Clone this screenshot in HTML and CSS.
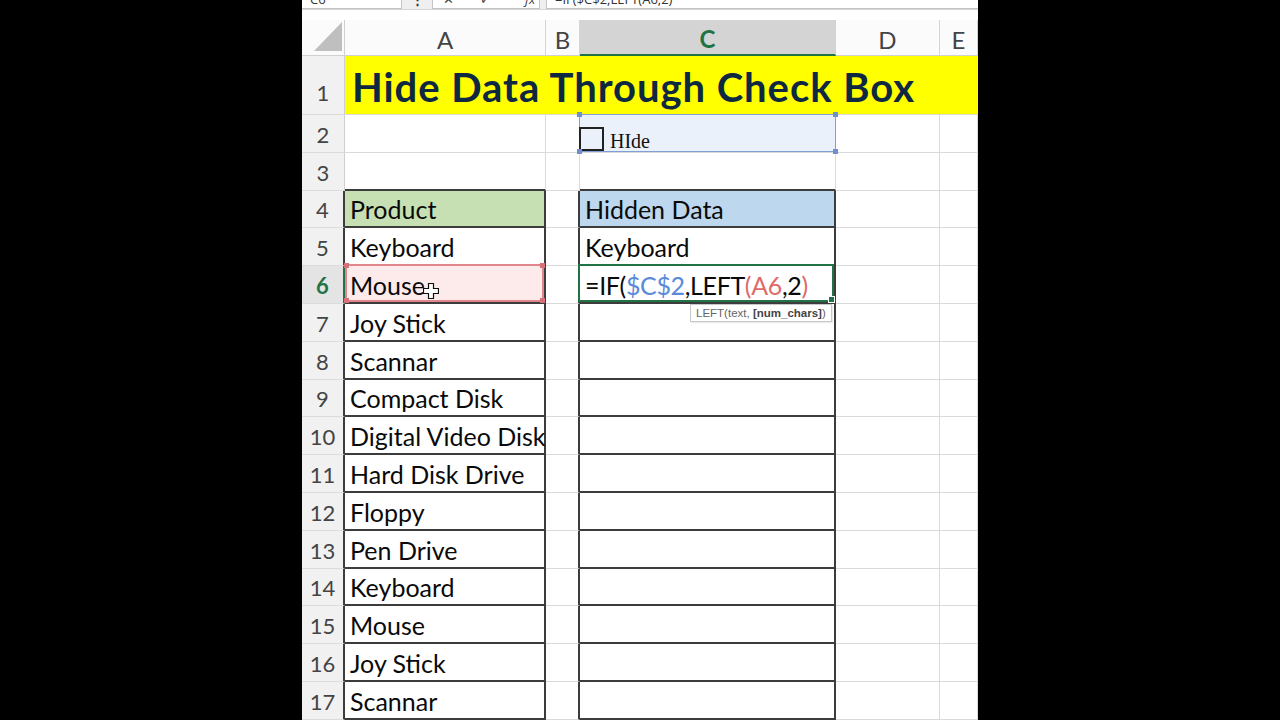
FILE: index.html
```html
<!DOCTYPE html>
<html lang="en">
<head>
<meta charset="utf-8">
<title>Hide Data Through Check Box</title>
<link rel="stylesheet" href="styles.css">
</head>
<body>
<div class="screen">
  <div class="topbar">
    <div class="box namebox"><span class="clip">C6</span></div>
    <div class="ribbon-sep"><span class="clip dots">⋮</span></div>
    <div class="box fnbox"><span class="clip icons"><span>✕</span><span>✓</span><span class="fx">fx</span></span></div>
    <div class="box formula"><span class="clip">=IF($C$2,LEFT(A6,2)</span></div>
  </div>
  <div class="gap"></div>
  <div class="sheet">
    <!-- column headers -->
    <div class="corner"><svg width="28" height="29" viewBox="0 0 28 29"><polygon points="0,29 28,0 28,29" fill="#bfbfbf"/></svg></div>
    <div class="ch">A</div>
    <div class="ch">B</div>
    <div class="ch sel">C</div>
    <div class="ch">D</div>
    <div class="ch">E</div>

    <!-- row 1 -->
    <div class="rh tall">1</div>
    <div class="title">Hide Data Through Check Box</div>

    <!-- row 2 -->
    <div class="rh">2</div>
    <div class="cell"></div>
    <div class="cell"></div>
    <div class="cell">
      <div class="control">
        <span class="chk"></span><span class="chk-label">HIde</span>
        <i class="hd blue tl"></i><i class="hd blue tr"></i><i class="hd blue bl"></i><i class="hd blue br"></i>
      </div>
    </div>
    <div class="cell"></div>
    <div class="cell"></div>

    <!-- row 3 -->
    <div class="rh">3</div>
    <div class="cell db"></div>
    <div class="cell"></div>
    <div class="cell db"></div>
    <div class="cell"></div>
    <div class="cell"></div>

    <!-- row 4 -->
    <div class="rh dr">4</div>
    <div class="cell t green">Product</div>
    <div class="cell dr"></div>
    <div class="cell t blue">Hidden Data</div>
    <div class="cell"></div>
    <div class="cell"></div>

    <!-- row 5 -->
    <div class="rh dr">5</div>
    <div class="cell t">Keyboard</div>
    <div class="cell dr"></div>
    <div class="cell t">Keyboard</div>
    <div class="cell"></div>
    <div class="cell"></div>

    <!-- row 6 -->
    <div class="rh sel">6</div>
    <div class="cell t ref">Mouse
      <div class="ref-frame"><i class="hd red tl"></i><i class="hd red tr"></i><i class="hd red bl"></i><i class="hd red br"></i></div>
      <svg class="cursor" width="16" height="16" viewBox="0 0 16 16"><path d="M5.5 0.5h5v5h5v5h-5v5h-5v-5h-5v-5h5z" fill="#fff" stroke="#111" stroke-width="1.2"/></svg>
    </div>
    <div class="cell dr"></div>
    <div class="cell t edit"><span>=IF(</span><span class="ref-blue">$C$2</span><span>,LEFT</span><span class="ref-red">(A6</span><span>,2</span><span class="ref-red">)</span>
      <div class="edit-frame"><i class="hd green br"></i></div>
      <div class="tip">LEFT(text, <b>[num_chars]</b>)</div>
    </div>
    <div class="cell"></div>
    <div class="cell"></div>

    <!-- row 7 -->
    <div class="rh dr">7</div>
    <div class="cell t">Joy Stick</div>
    <div class="cell dr"></div>
    <div class="cell t"></div>
    <div class="cell"></div>
    <div class="cell"></div>

    <!-- row 8 -->
    <div class="rh dr">8</div>
    <div class="cell t">Scannar</div>
    <div class="cell dr"></div>
    <div class="cell t"></div>
    <div class="cell"></div>
    <div class="cell"></div>

    <!-- row 9 -->
    <div class="rh dr">9</div>
    <div class="cell t">Compact Disk</div>
    <div class="cell dr"></div>
    <div class="cell t"></div>
    <div class="cell"></div>
    <div class="cell"></div>

    <!-- row 10 -->
    <div class="rh dr">10</div>
    <div class="cell t">Digital Video Disk</div>
    <div class="cell dr"></div>
    <div class="cell t"></div>
    <div class="cell"></div>
    <div class="cell"></div>

    <!-- row 11 -->
    <div class="rh dr">11</div>
    <div class="cell t">Hard Disk Drive</div>
    <div class="cell dr"></div>
    <div class="cell t"></div>
    <div class="cell"></div>
    <div class="cell"></div>

    <!-- row 12 -->
    <div class="rh dr">12</div>
    <div class="cell t">Floppy</div>
    <div class="cell dr"></div>
    <div class="cell t"></div>
    <div class="cell"></div>
    <div class="cell"></div>

    <!-- row 13 -->
    <div class="rh dr">13</div>
    <div class="cell t">Pen Drive</div>
    <div class="cell dr"></div>
    <div class="cell t"></div>
    <div class="cell"></div>
    <div class="cell"></div>

    <!-- row 14 -->
    <div class="rh dr">14</div>
    <div class="cell t">Keyboard</div>
    <div class="cell dr"></div>
    <div class="cell t"></div>
    <div class="cell"></div>
    <div class="cell"></div>

    <!-- row 15 -->
    <div class="rh dr">15</div>
    <div class="cell t">Mouse</div>
    <div class="cell dr"></div>
    <div class="cell t"></div>
    <div class="cell"></div>
    <div class="cell"></div>

    <!-- row 16 -->
    <div class="rh dr">16</div>
    <div class="cell t">Joy Stick</div>
    <div class="cell dr"></div>
    <div class="cell t"></div>
    <div class="cell"></div>
    <div class="cell"></div>

    <!-- row 17 -->
    <div class="rh dr">17</div>
    <div class="cell t">Scannar</div>
    <div class="cell dr"></div>
    <div class="cell t"></div>
    <div class="cell"></div>
    <div class="cell"></div>
  </div>
</div>
</body>
</html>
```

FILE: styles.css
```css
html, body {
  margin: 0;
  padding: 0;
  background: #000;
}

.screen {
  width: 676px;
  height: 720px;
  margin: 0 auto;
  background: #fff;
  overflow: hidden;
  font-family: Lato, "Open Sans", sans-serif;
}

/* ---------- formula bar strip (mostly scrolled off) ---------- */
.topbar {
  display: flex;
  height: 9px;
  background: #efefef;
  border-bottom: 1px solid #d6d6d6;
  overflow: hidden;
  font-family: "Open Sans", "Liberation Sans", sans-serif;
  font-size: 13px;
  color: #333;
}

.box {
  box-sizing: border-box;
  background: #fff;
  border-bottom: 1px solid #c4c4c4;
  border-right: 1px solid #c4c4c4;
  border-left: 1px solid #c4c4c4;
  overflow: hidden;
}

.namebox {
  width: 100px;
  border-left: none;
}

.ribbon-sep {
  width: 30px;
  display: flex;
  justify-content: center;
}

.fnbox {
  width: 108px;
}

.formula {
  flex: 1;
  margin-left: 6px;
  border-right: none;
}

.clip {
  display: block;
  line-height: 16px;
  margin-top: -9px;
  padding-left: 8px;
  white-space: nowrap;
}

.dots {
  padding-left: 0;
  font-weight: bold;
}

.icons {
  display: flex;
  gap: 26px;
  padding-left: 10px;
  color: #444;
}

.icons .fx {
  font-style: italic;
  margin-left: 8px;
}

.gap {
  height: 10px;
  background: #fff;
}

/* ---------- grid ---------- */
.sheet {
  display: grid;
  grid-template-columns: 43px 201px 34px 256px 104px 38px;
  grid-template-rows: 36px 59px repeat(16, 37.8px);
}

.corner {
  box-sizing: border-box;
  background: #fbfbfb;
  border-right: 1px solid #d0d0d0;
  border-bottom: 1px solid #d0d0d0;
  display: flex;
  justify-content: flex-end;
  align-items: flex-end;
  padding: 0 2px 4px 0;
}

.ch {
  box-sizing: border-box;
  background: #fbfbfb;
  border-right: 1px solid #d4d4d4;
  border-bottom: 1px solid #d0d0d0;
  display: flex;
  justify-content: center;
  align-items: flex-end;
  padding-bottom: 1px;
  font-size: 24px;
  line-height: 29px;
  color: #444;
}

.ch.sel {
  background: #d4d4d4;
  border-bottom: 2px solid #217346;
  color: #217346;
  font-weight: bold;
}

.rh {
  box-sizing: border-box;
  background: #f1f1f1;
  border-right: 1px solid #cfcfcf;
  border-bottom: 1px solid #dcdcdc;
  display: flex;
  justify-content: center;
  align-items: flex-end;
  padding-bottom: 4px;
  font-size: 22px;
  line-height: 26px;
  color: #444;
}

.rh.tall {
  padding-bottom: 8px;
}

.rh.dr {
  border-right: 2px solid #3c3c3c;
}

.rh.sel {
  background: #e4e4e4;
  border-right: 2px solid #217346;
  color: #217346;
  font-weight: bold;
}

.title {
  grid-column: 2 / span 5;
  box-sizing: border-box;
  background: #ffff00;
  border-bottom: 1px solid #dadada;
  display: flex;
  align-items: flex-end;
  padding: 0 0 3px 7px;
  font-size: 40px;
  line-height: 48px;
  letter-spacing: 0.95px;
  font-weight: bold;
  color: #0e2841;
  white-space: nowrap;
}

.cell {
  position: relative;
  box-sizing: border-box;
  border-right: 1px solid #dadada;
  border-bottom: 1px solid #dadada;
  display: flex;
  align-items: flex-end;
  padding: 0 0 2px 5px;
  font-size: 25px;
  line-height: 30px;
  color: #0a0a0a;
  white-space: nowrap;
}

.cell.t {
  border-right: 2px solid #3c3c3c;
  border-bottom: 2px solid #3c3c3c;
}

.cell.db {
  border-bottom: 2px solid #3c3c3c;
}

.cell.dr {
  border-right: 2px solid #3c3c3c;
}

.cell.green {
  background: #c6e0b4;
}

.cell.blue {
  background: #bdd7ee;
}

/* ---------- check box form control ---------- */
.control {
  position: absolute;
  left: -1px;
  top: -1px;
  right: -1px;
  bottom: 0;
  z-index: 2;
  box-sizing: border-box;
  background: #ebf1fa;
  border: 1px solid #7f9fd6;
  display: flex;
  align-items: flex-end;
}

.chk {
  box-sizing: border-box;
  width: 25px;
  height: 24px;
  border: 2px solid #222;
  margin-left: -1px;
}

.chk-label {
  font-family: "Liberation Serif", "DejaVu Serif", serif;
  font-size: 20px;
  line-height: 24px;
  margin-left: 6px;
  margin-bottom: -2px;
  color: #111;
}

/* ---------- handles ---------- */
.hd {
  position: absolute;
  width: 5px;
  height: 5px;
}

.hd.blue { background: #6f8fd0; }
.hd.red { background: #d8707a; }
.hd.green { background: #217346; border: 1px solid #fff; }

.hd.tl { left: -3px; top: -3px; }
.hd.tr { right: -3px; top: -3px; }
.hd.bl { left: -3px; bottom: -3px; }
.hd.br { right: -3px; bottom: -3px; }

/* ---------- referenced cell A6 ---------- */
.cell.ref {
  background: #fcebea;
}

.ref-frame {
  position: absolute;
  left: 0;
  top: -2px;
  right: 0;
  bottom: 0;
  border: 2px solid #e0868c;
  z-index: 2;
}

.cursor {
  position: absolute;
  left: 78px;
  top: 17px;
  z-index: 3;
}

/* ---------- editing cell C6 ---------- */
.cell.edit {
  background: #fff;
  letter-spacing: -0.35px;
}

.ref-blue { color: #5a8ad8; }
.ref-red { color: #e06a6a; }

.edit-frame {
  position: absolute;
  left: -2px;
  top: -2px;
  right: 0;
  bottom: 0;
  border: 2px solid #217346;
  z-index: 2;
}

.tip {
  position: absolute;
  left: 110px;
  top: calc(100% + 2px);
  z-index: 4;
  background: #fff;
  border: 1px solid #c8c8c8;
  box-shadow: 1px 1px 1px rgba(0, 0, 0, 0.08);
  padding: 0 5px;
  font-family: "Liberation Sans", Arial, sans-serif;
  font-size: 11.5px;
  line-height: 16px;
  letter-spacing: 0;
  color: #666;
}

.tip b {
  color: #444;
}
```
